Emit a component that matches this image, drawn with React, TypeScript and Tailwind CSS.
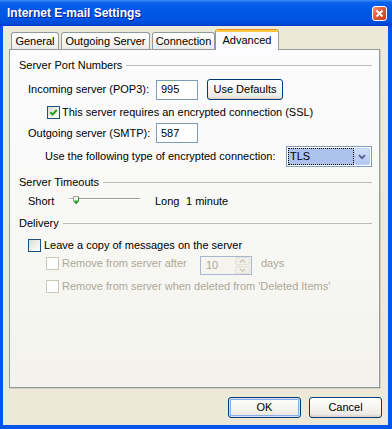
import React from "react";

const btnBg =
  "bg-[linear-gradient(to_bottom,#FFFFFF_0%,#F6F5F1_50%,#ECEBE6_85%,#D6D0C5_100%)]";

function Checkbox({ checked = false, disabled = false }: { checked?: boolean; disabled?: boolean }) {
  return (
    <div
      className={`w-[13px] h-[13px] shrink-0 border flex items-center justify-center ${
        disabled
          ? "border-[#CAC8BB] bg-white"
          : "border-[#1C5180] bg-[linear-gradient(135deg,#DCDCD7_0%,#F1F1EC_55%,#FFFFFF_100%)]"
      }`}
    >
      {checked && (
        <svg width="9" height="9" viewBox="0 0 9 9">
          <path d="M1.2 4.2 L3.5 6.5 L7.8 2" fill="none" stroke="#21A121" strokeWidth="2" />
        </svg>
      )}
    </div>
  );
}

function GroupHeader({ label }: { label: string }) {
  return (
    <div className="h-[13px] flex items-center">
      <span className="whitespace-nowrap">{label}</span>
      <div className="flex-1 ml-[4px] h-px bg-[#BDBCB2]" />
    </div>
  );
}

function TextBox({ value }: { value: string }) {
  return (
    <div className="w-[42px] h-[20px] border border-[#7F9DB9] bg-white flex items-center pl-[4px]">
      {value}
    </div>
  );
}

function Chevron({ color }: { color: string }) {
  return (
    <svg width="8" height="6" viewBox="0 0 8 6">
      <path d="M1 1.2 L4 4.2 L7 1.2" fill="none" stroke={color} strokeWidth="1.8" />
    </svg>
  );
}

function Tab({ label, w, ml }: { label: string; w: string; ml: string }) {
  return (
    <div
      className={`${w} ${ml} h-[17px] border border-b-0 border-[#919B9C] rounded-t-[3px] bg-[linear-gradient(to_bottom,#FFFFFF_0%,#F7F7F4_50%,#ECEBE6_100%)] flex items-center justify-center pt-px whitespace-nowrap`}
    >
      {label}
    </div>
  );
}

export default function App() {
  return (
    <div className="w-[392px] h-[429px] flex flex-col font-['Liberation_Sans',Arial,sans-serif] text-[11px] leading-[13px] text-black select-none">
      {/* Title bar */}
      <div className="h-[26px] shrink-0 flex items-center justify-between pl-[7px] pr-[5px] bg-[linear-gradient(to_bottom,#3D8CF6_0%,#0A62EC_10%,#0058E8_35%,#0054E3_75%,#0047D6_92%,#003CCB_100%)]">
        <span className="text-white font-bold text-[12px] leading-[14px] [text-shadow:1px_1px_#0A1A8A]">
          Internet E-mail Settings
        </span>
        <div className="w-[15px] h-[15px] rounded-[3px] border border-white bg-[linear-gradient(135deg,#F09A7E_0%,#E2603D_40%,#C73A1B_100%)] flex items-center justify-center">
          <svg width="9" height="9" viewBox="0 0 9 9">
            <path d="M1.5 1.5 L7.5 7.5 M7.5 1.5 L1.5 7.5" stroke="white" strokeWidth="1.8" />
          </svg>
        </div>
      </div>

      {/* Client area */}
      <div className="flex-1 flex flex-col bg-[#ECE9D8] border-l-[3px] border-r-[4px] border-b-[4px] border-[#0055EA]">
        <div className="pl-[6px] pr-[8px] pt-[3px] flex flex-col">
          {/* Tabs */}
          <div className="h-[20px] flex items-end relative z-10">
            <Tab label="General" w="w-[48px]" ml="ml-[2px]" />
            <Tab label="Outgoing Server" w="w-[89px]" ml="ml-[2px]" />
            <Tab label="Connection" w="w-[63px]" ml="ml-[2px]" />
            <div className="w-[64px] h-[21px] -mb-px border-x border-[#919B9C] rounded-t-[3px] bg-[#FCFCFE] flex flex-col overflow-hidden">
              <div className="h-px bg-[#E68B2C] shrink-0" />
              <div className="h-[2px] bg-[#FFC73C] shrink-0" />
              <div className="flex-1 flex items-start justify-center pt-[2px]">Advanced</div>
            </div>
          </div>

          {/* Panel */}
          <div className="h-[339px] border border-[#919B9C] bg-[linear-gradient(to_bottom,#FCFCFE_0%,#F8F8F6_50%,#F3F2EC_100%)] shadow-[1px_1px_0_#D0CEBF] flex flex-col pl-[9px] pr-[7px] pt-[9px]">
            <GroupHeader label="Server Port Numbers" />

            <div className="mt-[7px] h-[21px] flex items-center pl-[9px]">
              <span className="w-[128px] whitespace-nowrap">Incoming server (POP3):</span>
              <TextBox value="995" />
              <div
                className={`ml-[9px] w-[76px] h-[21px] border border-[#003C74] rounded-[3px] ${btnBg} flex items-center justify-center`}
              >
                Use Defaults
              </div>
            </div>

            <div className="mt-[6px] h-[13px] flex items-center pl-[28px]">
              <Checkbox checked />
              <span className="ml-[2px] whitespace-nowrap">
                This server requires an encrypted connection (SSL)
              </span>
            </div>

            <div className="mt-[4px] h-[20px] flex items-center pl-[9px]">
              <span className="w-[128px] whitespace-nowrap">Outgoing server (SMTP):</span>
              <TextBox value="587" />
            </div>

            <div className="mt-[3px] h-[21px] flex items-center pl-[26px]">
              <span className="w-[242px] whitespace-nowrap">
                Use the following type of encrypted connection:
              </span>
              <div className="w-[86px] h-[21px] border border-[#7F9DB9] bg-white flex items-center pl-px pr-px">
                <div className="w-[66px] h-[17px] border border-dotted border-black bg-[#ADC2EC] flex items-center pl-px">
                  TLS
                </div>
                <div className="ml-auto w-[16px] h-[17px] rounded-[2px] border border-[#B9CCF5] bg-[linear-gradient(to_bottom,#D2DFFC_0%,#C1D3FB_50%,#B2C6F6_100%)] flex items-center justify-center">
                  <Chevron color="#4D6185" />
                </div>
              </div>
            </div>

            <div className="mt-[9px]">
              <GroupHeader label="Server Timeouts" />
            </div>

            <div className="mt-[6px] h-[13px] flex items-center pl-[9px]">
              <span className="w-[40px]">Short</span>
              <div className="w-[72px] h-[13px] relative">
                <div className="absolute left-0 right-0 top-[3px] h-px bg-[#9D9C99]" />
                <div className="absolute left-0 right-0 top-[4px] h-px bg-white" />
                <div className="absolute left-0 top-[3px] w-[3px] h-px bg-[#D4D3CC]" />
                <svg className="absolute left-[5px] top-[1px]" width="7" height="9" viewBox="0 0 7 9">
                  <path d="M0.5 0.5 H5.5 V5 L3 8 L0.5 5 Z" fill="#F7F7F4" stroke="#A3A298" strokeWidth="1" />
                  <path d="M1.5 4.5 L3 6.5 L4.5 4.5" fill="none" stroke="#21A121" strokeWidth="1.4" />
                  <path d="M5.5 1 V5 L3 8" fill="none" stroke="#21A121" strokeWidth="1" />
                </svg>
              </div>
              <span className="ml-[15px] w-[31px]">Long</span>
              <span className="whitespace-nowrap">1 minute</span>
            </div>

            <div className="mt-[9px]">
              <GroupHeader label="Delivery" />
            </div>

            <div className="mt-[9px] h-[13px] flex items-center pl-[9px]">
              <Checkbox />
              <span className="ml-[3px] whitespace-nowrap">Leave a copy of messages on the server</span>
            </div>

            <div className="mt-[4px] h-[19px] flex items-start pl-[27px] text-[#ACA899]">
              <div className="mt-px">
                <Checkbox disabled />
              </div>
              <span className="ml-[3px] mt-px w-[138px] whitespace-nowrap">Remove from server after</span>
              <div className="w-[52px] h-[19px] border border-[#A7B8CC] bg-[#F5F4EF] flex items-center pl-[5px] pr-px">
                <span>10</span>
                <div className="ml-auto w-[15px] h-[17px] flex flex-col gap-px">
                  <div className="flex-1 rounded-[2px] border border-[#E2E0D6] bg-[#F0EFEA] flex items-center justify-center">
                    <svg width="7" height="4" viewBox="0 0 7 4">
                      <path d="M1 3.3 L3.5 0.8 L6 3.3" fill="none" stroke="#C9C7BA" strokeWidth="1.4" />
                    </svg>
                  </div>
                  <div className="flex-1 rounded-[2px] border border-[#E2E0D6] bg-[#F0EFEA] flex items-center justify-center">
                    <svg width="7" height="4" viewBox="0 0 7 4">
                      <path d="M1 0.7 L3.5 3.2 L6 0.7" fill="none" stroke="#C9C7BA" strokeWidth="1.4" />
                    </svg>
                  </div>
                </div>
              </div>
              <span className="ml-[9px] mt-px">days</span>
            </div>

            <div className="mt-[5px] h-[13px] flex items-center pl-[27px] text-[#ACA899]">
              <Checkbox disabled />
              <span className="ml-[3px] whitespace-nowrap">
                Remove from server when deleted from 'Deleted Items'
              </span>
            </div>
          </div>
        </div>

        {/* Buttons */}
        <div className="mt-[9px] flex justify-end pr-[6px] gap-[8px]">
          <div
            className={`w-[73px] h-[21px] border border-[#003C74] rounded-[3px] ${btnBg} shadow-[inset_0_0_0_1px_#CEE1FC,inset_0_0_0_2px_#8BAEE8] flex items-center justify-center`}
          >
            OK
          </div>
          <div
            className={`w-[73px] h-[21px] border border-[#003C74] rounded-[3px] ${btnBg} flex items-center justify-center`}
          >
            Cancel
          </div>
        </div>
      </div>
    </div>
  );
}
